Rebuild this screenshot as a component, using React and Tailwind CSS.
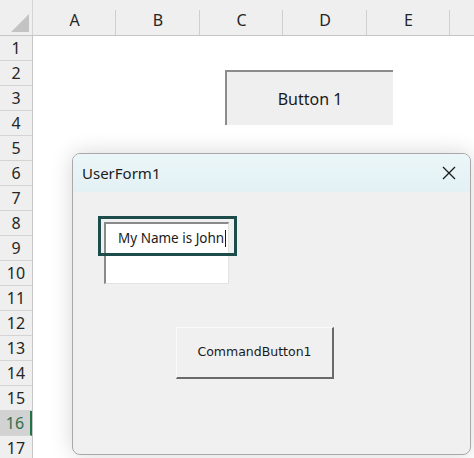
import React from 'react';

const cols = [
  { label: 'A', w: 'w-[83px]' },
  { label: 'B', w: 'w-[84px]' },
  { label: 'C', w: 'w-[83px]' },
  { label: 'D', w: 'w-[84px]' },
  { label: 'E', w: 'w-[83px]' },
  { label: '', w: 'w-[30px]' },
];

const rows = Array.from({ length: 17 }, (_, i) => i + 1);

const ColumnHeader = () => (
  <div className="flex h-[36px] bg-[#efefef] border-b border-[#c6c6c6]">
    {/* corner cell */}
    <div className="relative w-[33px] shrink-0 border-r border-[#d4d4d4]">
      <div className="absolute right-[3px] bottom-[3px] w-0 h-0 border-l-[18px] border-l-transparent border-b-[18px] border-b-[#c3c3c3]" />
    </div>
    {cols.map((c, i) => (
      <div key={i} className={`relative ${c.w} shrink-0 flex items-end justify-center pb-[3px] text-[16px] text-[#262626]`}>
        {c.label}
        {i < cols.length - 1 && (
          <div className="absolute right-0 top-[10px] bottom-0 w-px bg-[#cfcfcf]" />
        )}
      </div>
    ))}
  </div>
);

const RowHeaders = () => (
  <div className="w-[33px] shrink-0 bg-[#efefef] border-r border-[#c6c6c6]">
    {rows.map((r) => (
      <div
        key={r}
        className={`h-[25px] flex items-center justify-center border-b border-[#d4d4d4] text-[16px] ${
          r === 16 ? 'bg-[#d2d2d2] text-[#2f6f4c] border-r-2 border-r-[#217346]' : 'text-[#262626]'
        }`}
      >
        {r}
      </div>
    ))}
  </div>
);

const CloseIcon = () => (
  <svg width="14" height="14" viewBox="0 0 14 14" fill="none" stroke="#1a1a1a" strokeWidth="1.3">
    <path d="M1 1 L13 13 M13 1 L1 13" />
  </svg>
);

const UserForm = () => (
  <div className="absolute left-[39px] top-[117px] w-[399px] h-[302px] rounded-[8px] border border-[#a9a9a9] bg-[#f0f0f0] overflow-hidden shadow-[0_0_22px_rgba(0,0,0,0.16)]">
    <div className="h-[38px] flex items-center justify-between pl-[9px] pr-[14px] bg-gradient-to-b from-[#eaf6f8] to-[#e4f1f4]">
      <span className="text-[15px] text-[#1b1b1b] font-['Noto_Sans',sans-serif]">UserForm1</span>
      <CloseIcon />
    </div>
    <div className="relative">
      {/* text box */}
      <div className="absolute left-[31px] top-[30px] w-[125px] h-[62px] bg-white border-t-2 border-l-2 border-t-[#8a8a8a] border-l-[#8a8a8a] border-r border-b border-r-[#e3e3e3] border-b-[#e3e3e3]">
        <div className="flex items-center whitespace-nowrap pl-[12px] pt-[6px] text-[13.5px] text-[#1a1a1a] font-['Noto_Sans',sans-serif] leading-none">
          <span>My Name is John</span>
          <span className="ml-[1px] w-px h-[17px] bg-[#1a1a1a]" />
        </div>
      </div>
      {/* focus rectangle */}
      <div className="absolute left-[25px] top-[24px] w-[139px] h-[40px] border-[3px] border-[#1d4d4a]" />
      {/* command button */}
      <div className="absolute left-[103px] top-[135px] w-[158px] h-[52px] flex items-center justify-center whitespace-nowrap bg-[#f0f0f0] border-t border-l border-t-[#fafafa] border-l-[#fafafa] border-r-2 border-b-2 border-r-[#6a6a6a] border-b-[#6a6a6a] text-[12.5px] text-[#1a1a1a] font-['DejaVu_Sans',sans-serif]">
        CommandButton1
      </div>
    </div>
  </div>
);

export default function App() {
  return (
    <div className="relative w-[474px] h-[458px] overflow-hidden bg-white font-['Noto_Sans','Open_Sans',sans-serif]">
      <ColumnHeader />
      <div className="flex">
        <RowHeaders />
        <div className="relative flex-1 bg-white">
          {/* Button 1 on sheet */}
          <div className="absolute left-[192px] top-[34px] w-[168px] h-[55px] flex items-center justify-center bg-[#efefef] border-t-2 border-l-2 border-t-[#8c8c8c] border-l-[#8c8c8c] text-[16px] text-[#1a1a1a]">
            Button 1
          </div>
          <UserForm />
        </div>
      </div>
    </div>
  );
}
